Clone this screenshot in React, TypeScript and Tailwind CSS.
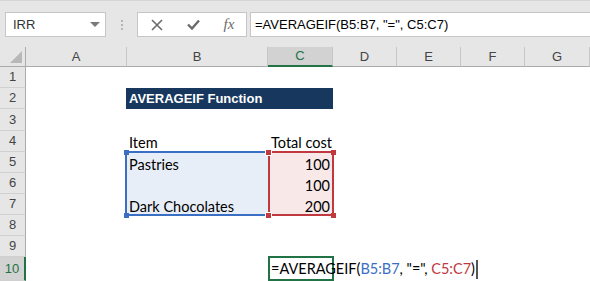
import React from "react";

const colHeads = [
  { label: "A", cls: "col-start-2" },
  { label: "B", cls: "col-start-3" },
  { label: "C", cls: "col-start-4", active: true },
  { label: "D", cls: "col-start-5" },
  { label: "E", cls: "col-start-6" },
  { label: "F", cls: "col-start-7" },
  { label: "G", cls: "col-start-8" },
];

const rowStarts = [
  "row-start-2",
  "row-start-3",
  "row-start-4",
  "row-start-5",
  "row-start-6",
  "row-start-7",
  "row-start-8",
  "row-start-9",
  "row-start-10",
  "row-start-11",
];

const cellFont = { fontFamily: "Lato, 'Open Sans', sans-serif" };

const Handle = ({ className }: { className: string }) => (
  <span className={`absolute w-[5px] h-[5px] ${className}`} />
);

const FormulaBar = () => (
  <div className="h-[47px] bg-[#e6e6e6] border-t border-[#d6d6d6] flex items-start pt-[11px] pl-[5px] gap-0">
    <div className="w-[101px] h-[25px] bg-white border border-[#c6c6c6] flex items-center justify-between pl-[7px] pr-[5px]">
      <span className="text-[13px] text-[#333]">IRR</span>
      <span className="w-0 h-0 border-l-[5px] border-r-[5px] border-t-[5px] border-l-transparent border-r-transparent border-t-[#7a7a7a]" />
    </div>
    <div className="w-[31px] h-[25px] flex flex-col items-center justify-center gap-[2px]">
      <span className="w-[2px] h-[2px] bg-[#b5b5b5]" />
      <span className="w-[2px] h-[2px] bg-[#b5b5b5]" />
      <span className="w-[2px] h-[2px] bg-[#b5b5b5]" />
    </div>
    <div className="w-[110px] h-[25px] bg-white border border-[#c6c6c6] flex items-center">
      <div className="w-[37px] flex justify-center">
        <svg width="12" height="12" viewBox="0 0 12 12">
          <path d="M1 1 L11 11 M11 1 L1 11" stroke="#6b6b6b" strokeWidth="1.6" fill="none" />
        </svg>
      </div>
      <div className="w-[37px] flex justify-center">
        <svg width="13" height="11" viewBox="0 0 13 11">
          <path d="M1 5.5 L5 9.5 L12 1.5" stroke="#6b6b6b" strokeWidth="2.4" fill="none" />
        </svg>
      </div>
      <div className="w-[34px] flex justify-center">
        <span className="italic text-[15px] text-[#6b6b6b] leading-none" style={{ fontFamily: "'Liberation Serif', serif" }}>
          fx
        </span>
      </div>
    </div>
    <div className="flex-1 h-[25px] ml-[3px] bg-white border-y border-l border-[#c6c6c6] flex items-center pl-[4px]">
      <span className="text-[13px] text-black whitespace-nowrap">=AVERAGEIF(B5:B7, "=", C5:C7)</span>
    </div>
  </div>
);

export default function App() {
  return (
    <div className="w-[590px] h-[281px] overflow-hidden bg-white" style={{ fontFamily: "'Liberation Sans', Arial, sans-serif" }}>
      <FormulaBar />
      <div className="grid grid-cols-[26px_101px_141px_65px_64px_64px_64px_1fr] grid-rows-[20px_21px_21px_22px_21px_21px_21px_21px_21px_21px_24px]">
        {/* corner */}
        <div className="col-start-1 row-start-1 bg-[#e6e6e6] border-r border-b border-[#ababab] relative">
          <svg className="absolute right-[3px] bottom-[3px]" width="12" height="12" viewBox="0 0 12 12">
            <path d="M12 0 L12 12 L0 12 Z" fill="#b8b8b8" />
          </svg>
        </div>
        {colHeads.map((c) => (
          <div
            key={c.label}
            className={`${c.cls} row-start-1 flex items-center justify-center text-[13px] ${
              c.active
                ? "bg-[#d2d2d2] text-[#217346] border-b-2 border-b-[#217346] border-r border-r-[#c6c6c6]"
                : "bg-[#e6e6e6] text-[#444] border-b border-b-[#ababab] border-r border-r-[#c6c6c6]"
            }`}
          >
            {c.label}
          </div>
        ))}
        <div className="col-start-9 row-start-1 bg-[#e6e6e6] border-b border-[#ababab]" />
        {rowStarts.map((r, i) => (
          <div
            key={r}
            className={`col-start-1 ${r} flex items-center justify-center text-[13px] border-b border-b-[#d0d0d0] ${
              i === 9
                ? "bg-[#d2d2d2] text-[#217346] border-r-2 border-r-[#217346]"
                : "bg-[#e6e6e6] text-[#444] border-r border-r-[#ababab]"
            }`}
          >
            {i + 1}
          </div>
        ))}

        {/* B2:C2 title */}
        <div className="col-start-3 col-span-2 row-start-3 -ml-px bg-[#17375e] flex items-center pl-[3px]">
          <span className="text-white font-bold text-[13px]">AVERAGEIF Function</span>
        </div>

        {/* row 4 headings */}
        <div className="col-start-3 row-start-5 flex items-end pl-[2px] pb-[2px] text-[14.5px] leading-[15px] text-black" style={cellFont}>
          Item
        </div>
        <div className="col-start-4 row-start-5 flex items-end pl-[3px] pb-[2px] text-[14.5px] leading-[15px] text-black whitespace-nowrap" style={cellFont}>
          Total cost
        </div>

        {/* B5:B7 range */}
        <div className="col-start-3 row-start-6 row-span-3 relative bg-[#e8eef8] text-[14.5px] leading-[15px] text-black" style={cellFont}>
          <div className="absolute -left-[2px] -top-px right-0 -bottom-px border-2 border-[#3a6fc4] border-r-0" />
          <Handle className="bg-[#3a6fc4] -left-[3px] -top-[2px]" />
          <Handle className="bg-[#3a6fc4] -left-[3px] -bottom-[3px]" />
          <div className="flex flex-col">
            <div className="h-[21px] flex items-end pl-[2px] pb-px">Pastries</div>
            <div className="h-[21px]" />
            <div className="h-[21px] flex items-end pl-[2px] pb-px">Dark Chocolates</div>
          </div>
        </div>

        {/* C5:C7 range */}
        <div className="col-start-4 row-start-6 row-span-3 relative bg-[#f9e8e8] text-[14.5px] leading-[15px] text-black" style={cellFont}>
          <div className="absolute left-0 -top-px -right-px -bottom-px border-2 border-[#c0393f]" />
          <Handle className="bg-[#c0393f] -left-[2px] -top-[2px] outline outline-1 outline-white" />
          <Handle className="bg-[#c0393f] -right-[3px] -top-[2px]" />
          <Handle className="bg-[#c0393f] -left-[2px] -bottom-[3px] outline outline-1 outline-white" />
          <Handle className="bg-[#c0393f] -right-[3px] -bottom-[3px]" />
          <div className="flex flex-col">
            <div className="h-[21px] flex items-end justify-end pr-[3px] pb-px">100</div>
            <div className="h-[21px] flex items-end justify-end pr-[3px] pb-px">100</div>
            <div className="h-[21px] flex items-end justify-end pr-[3px] pb-px">200</div>
          </div>
        </div>

        {/* C10 active cell */}
        <div className="col-start-4 row-start-11 relative text-[14.5px] text-black" style={cellFont}>
          <div className="absolute left-0 -top-px -right-px bottom-0 border-2 border-[#217346]" />
          <div className="relative h-[22px] pl-[3px] pt-[2px] whitespace-nowrap leading-[20px]">
            =AVERAGEIF(<span className="text-[#3a6fc4]">B5:B7</span>, "=", <span className="text-[#c0393f]">C5:C7</span>)
            <span className="inline-block w-[2px] h-[19px] bg-[#555] ml-[1px] align-bottom" />
          </div>
        </div>
      </div>
    </div>
  );
}
